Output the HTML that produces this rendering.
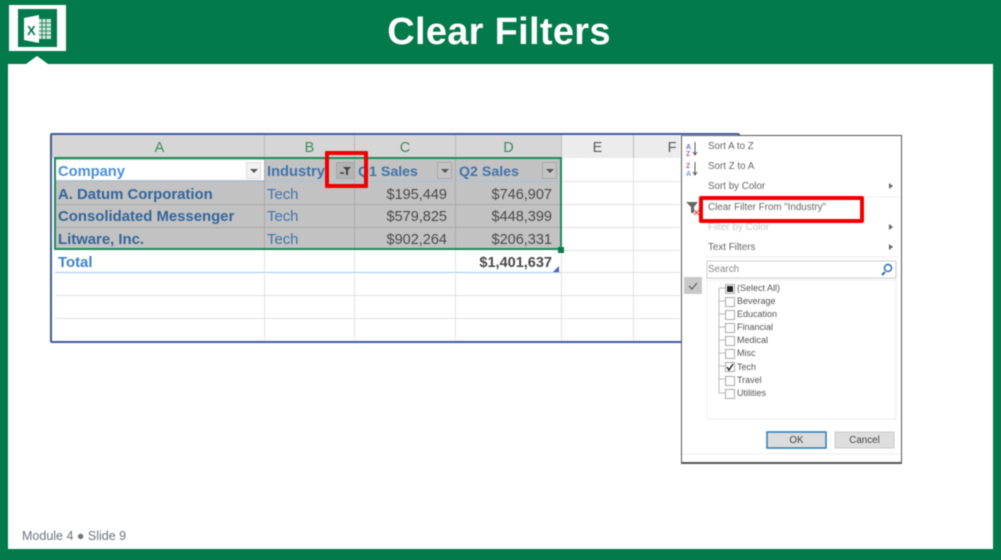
<!DOCTYPE html>
<html><head><meta charset="utf-8">
<style>
html,body{margin:0;padding:0;width:1001px;height:560px;overflow:hidden;background:#037a4b;font-family:"Liberation Sans",sans-serif}
#g,#m{filter:blur(.55px)}
#g div,#g span,#m div{position:absolute;white-space:nowrap}
.a{position:absolute}
.t{color:#3f74ab;font-weight:bold;font-size:14.9px;line-height:22px}
.n{color:#4a4a4a;font-size:14.5px;line-height:22px;text-align:right}
.h{color:#5a5a5a;font-size:14.5px;line-height:22px;text-align:center;top:137px}
.dd{width:15px;height:17px;background:#c4c4c4;border:1px solid #aaa;box-sizing:border-box}
.dd:after{content:"";position:absolute;left:3px;top:6px;border:4px solid transparent;border-top:4px solid #555;border-bottom:0}
.hl{height:1px;background:#e2e2e2;left:55px;width:625px}
.vl{width:1px;background:#e2e2e2;top:158px;height:182px}
.mi{font-size:9.8px;color:#666;left:708px;line-height:12px}
.cb{left:725px;width:8px;height:8px;border:1px solid #aaa;background:#fff}
.cl{left:737px;font-size:9px;color:#555;line-height:12px}
</style></head><body>
<div id="g">
<div style="left:-5px;top:-5px;width:1011px;height:570px;background:#037a4b"></div>
<div style="left:8px;top:64px;width:985px;height:485px;background:#fff"></div>
<div style="left:9px;top:5px;width:57px;height:46px;background:#fff"></div>
<div style="left:18px;top:9px;width:39px;height:38px;background:#037a4b"></div>
<svg class="a" style="left:0;top:0" width="70" height="70">
<path d="M24 18L39 15V43L24 40Z" fill="#fff"/><path d="M39 19H51V39H39Z" fill="#cfe6da"/>
<path d="M42 19V39M46 19V39M39 23H51M39 27H51M39 31H51M39 35H51" stroke="#037a4b" stroke-width=".8"/>
<text x="27" y="35" font-family="Liberation Sans" font-weight="bold" font-size="13" fill="#037a4b">X</text>
<path d="M26 64L37 56L48 64Z" fill="#fff"/></svg>
<div style="left:0;width:998px;top:9px;text-align:center;color:#fff;font-weight:bold;font-size:38px;line-height:46px;letter-spacing:.3px">Clear Filters</div>

<div style="left:50px;top:133px;width:690px;height:210px;border:2px solid #3f5a9c;border-radius:2px;box-sizing:border-box"></div>
<div style="left:52px;top:135px;width:628px;height:23px;background:#d6d6d6"></div>
<div style="left:562px;top:135px;width:118px;height:23px;background:#ececec"></div>
<div style="left:55px;top:158px;width:506px;height:92px;background:#c2c2c2"></div>
<div style="left:56px;top:160px;width:208px;height:20px;background:#fff"></div>
<div class="hl" style="top:204px;background:#aaa;width:506px"></div><div class="hl" style="top:227px;background:#aaa;width:506px"></div>
<div class="hl" style="top:181px;left:562px;width:118px"></div><div class="hl" style="top:204px;left:562px;width:118px"></div><div class="hl" style="top:227px;left:562px;width:118px"></div><div class="hl" style="top:250px;left:562px;width:118px"></div>
<div class="hl" style="top:272px"></div><div class="hl" style="top:295px"></div><div class="hl" style="top:318px"></div>
<div style="left:55px;top:272px;width:506px;height:1px;background:#a5c8ea"></div>
<div style="left:55px;top:181px;width:506px;height:1px;background:#a9bfd6"></div>
<div class="vl" style="left:264px;top:250px;height:90px"></div><div class="vl" style="left:354px;top:250px;height:90px"></div><div class="vl" style="left:455px;top:250px;height:90px"></div><div class="vl" style="left:561px"></div><div class="vl" style="left:633px"></div>
<div class="vl" style="left:264px;height:92px;background:#aaa"></div><div class="vl" style="left:354px;height:92px;background:#aaa"></div><div class="vl" style="left:455px;height:92px;background:#aaa"></div>
<div class="vl" style="left:264px;top:135px;height:23px;background:#bbb"></div><div class="vl" style="left:354px;top:135px;height:23px;background:#bbb"></div><div class="vl" style="left:455px;top:135px;height:23px;background:#bbb"></div><div class="vl" style="left:561px;top:135px;height:23px;background:#bbb"></div><div class="vl" style="left:633px;top:135px;height:23px;background:#bbb"></div>

<div class="h" style="left:55px;width:209px;color:#3f8a62">A</div><div class="h" style="left:265px;width:89px;color:#3f8a62">B</div><div class="h" style="left:355px;width:100px;color:#3f8a62">C</div><div class="h" style="left:456px;width:105px;color:#3f8a62">D</div><div class="h" style="left:562px;width:71px">E</div><div class="h" style="left:634px;width:76px">F</div>

<div class="t" style="left:58px;top:161px;color:#4a90d6;font-size:14.7px">Company</div><div class="t" style="left:267px;top:161px;font-size:14.7px">Industry</div><div class="t" style="left:358px;top:161px;font-size:14.2px">Q1 Sales</div><div class="t" style="left:459px;top:161px;font-size:14.2px">Q2 Sales</div>
<div class="t" style="left:58px;top:184px;color:#33659b">A. Datum Corporation</div><div class="t" style="left:58px;top:206px;color:#33659b">Consolidated Messenger</div><div class="t" style="left:58px;top:229px;color:#33659b">Litware, Inc.</div><div class="t" style="left:58px;top:252px;color:#3d83cc">Total</div>
<div class="t" style="left:267px;top:184px;font-weight:normal">Tech</div><div class="t" style="left:267px;top:206px;font-weight:normal">Tech</div><div class="t" style="left:267px;top:229px;font-weight:normal">Tech</div>
<div class="n" style="left:355px;width:92px;top:184px">$195,449</div><div class="n" style="left:355px;width:92px;top:206px">$579,825</div><div class="n" style="left:355px;width:92px;top:229px">$902,264</div>
<div class="n" style="left:456px;width:96px;top:184px">$746,907</div><div class="n" style="left:456px;width:96px;top:206px">$448,399</div><div class="n" style="left:456px;width:96px;top:229px">$206,331</div>
<div class="n" style="left:456px;width:96px;top:252px;font-weight:bold">$1,401,637</div>
<div class="dd" style="left:246px;top:162px;background:#f2f2f2;border-color:#ddd"></div><div class="dd" style="left:437px;top:162px"></div><div class="dd" style="left:542px;top:162px"></div>
<div style="left:336px;top:162px;width:19px;height:17px;background:#b4b4b4;border:1px solid #a5a5a5;box-sizing:border-box"></div>
<svg class="a" style="left:336px;top:162px" width="19" height="17"><path d="M7 5H15L12 8V13H10V8Z" fill="#444"/><path d="M4 11H8" stroke="#444" stroke-width="1.5"/></svg>

<div style="left:54px;top:157px;width:508px;height:93px;border:2px solid #1f8a5a;box-sizing:border-box"></div>
<div style="left:558px;top:247px;width:6px;height:6px;background:#0d7a4c"></div>
<svg class="a" style="left:553px;top:266px" width="8" height="7"><path d="M0 6L6 0V6Z" fill="#4a5fc0"/></svg>
<div style="left:325px;top:151px;width:43px;height:37px;border:4px solid #f00000;box-sizing:border-box;border-radius:1px"></div>
<div style="left:22px;top:528px;font-size:12.5px;line-height:16px;color:#6f7480">Module 4 ● Slide 9</div>
</div>

<div id="m">
<div style="left:681px;top:135px;width:221px;height:329px;background:#fff;border:1px solid #555;border-bottom-width:2px;box-sizing:border-box;position:absolute"></div>
<div class="mi" style="top:141px">Sort A to Z</div>
<div class="mi" style="top:161px">Sort Z to A</div>
<div class="mi" style="top:181px">Sort by Color</div>
<div class="mi" style="top:202px">Clear Filter From "Industry"</div>
<div class="mi" style="top:222px;color:#c9c9c9">Filter by Color</div>
<div class="mi" style="top:242px">Text Filters</div>
<svg style="position:absolute;left:681px;top:135px" width="221" height="329">
<text x="5" y="14" font-size="7" fill="#6a6ac8" font-family="Liberation Sans" font-weight="bold">A</text><text x="5" y="21" font-size="7" fill="#b060b0" font-family="Liberation Sans" font-weight="bold">Z</text><path d="M14 7V19M12 17L14 20L16 17" stroke="#555" fill="none"/>
<text x="5" y="33" font-size="7" fill="#b060b0" font-family="Liberation Sans" font-weight="bold">Z</text><text x="5" y="41" font-size="7" fill="#6a9ad8" font-family="Liberation Sans" font-weight="bold">A</text><path d="M14 27V39M12 37L14 40L16 37" stroke="#555" fill="none"/>
<path d="M5 67H17L13 72V78H10V72Z" fill="#666"/><path d="M13 75L18 80M18 75L13 80" stroke="#e04040" stroke-width="1"/>
<path d="M208 48L212 51L208 54ZM208 89L212 92L208 95Z M208 109L212 112L208 115Z" fill="#666"/>
<path d="M24 62H218M24 122H218" stroke="#eee"/>
<rect x="26" y="126" width="189" height="17" fill="#fff" stroke="#ccc"/>
<circle cx="207" cy="133" r="3.5" fill="none" stroke="#2a6fb5" stroke-width="1.5"/><path d="M204 137L201 140" stroke="#2a6fb5" stroke-width="2"/>
<rect x="3" y="142" width="18" height="17" fill="#c8c8c8"/><path d="M8 151L11 154L16 148" stroke="#666" fill="none" stroke-width="1.3"/>
<rect x="26" y="145" width="189" height="139" fill="#fff" stroke="#eee"/>
<path d="M38 153V258M38 153H44M38 166H44M38 179H44M38 192H44M38 205H44M38 218H44M38 231H44M38 244H44M38 258H44" stroke="#bbb" fill="none"/>
<rect x="86" y="297" width="59" height="16" fill="#dcdcdc" stroke="#2a7ab8" stroke-width="1.5"/>
<rect x="154" y="297" width="59" height="16" fill="#dedede" stroke="#ccc"/>
<path d="M1 319H219" stroke="#eee"/>
</svg>
<div class="cb" style="top:284px;background:#fff"></div><div style="left:727px;top:286px;width:6px;height:6px;background:#222"></div>
<div class="cb" style="top:297px"></div><div class="cb" style="top:310px"></div><div class="cb" style="top:323px"></div><div class="cb" style="top:336px"></div><div class="cb" style="top:349px"></div><div class="cb" style="top:362px"></div><div class="cb" style="top:376px"></div><div class="cb" style="top:389px"></div>
<svg style="position:absolute;left:725px;top:362px" width="10" height="10"><path d="M2 5L4 8L8 2" stroke="#222" fill="none" stroke-width="1.4"/></svg>
<div class="cl" style="top:282px">(Select All)</div><div class="cl" style="top:295px">Beverage</div><div class="cl" style="top:308px">Education</div><div class="cl" style="top:321px">Financial</div><div class="cl" style="top:334px">Medical</div><div class="cl" style="top:347px">Misc</div><div class="cl" style="top:361px">Tech</div><div class="cl" style="top:374px">Travel</div><div class="cl" style="top:387px">Utilities</div>
<div class="mi" style="left:708px;top:264px;color:#888">Search</div>
<div class="mi" style="left:767px;width:59px;text-align:center;top:435px;color:#444">OK</div>
<div class="mi" style="left:835px;width:59px;text-align:center;top:435px;color:#444">Cancel</div>
<div style="left:699px;top:196px;width:165px;height:27px;border:4px solid #f00000;box-sizing:border-box;border-radius:2px;position:absolute"></div>
</div>
</body></html>
